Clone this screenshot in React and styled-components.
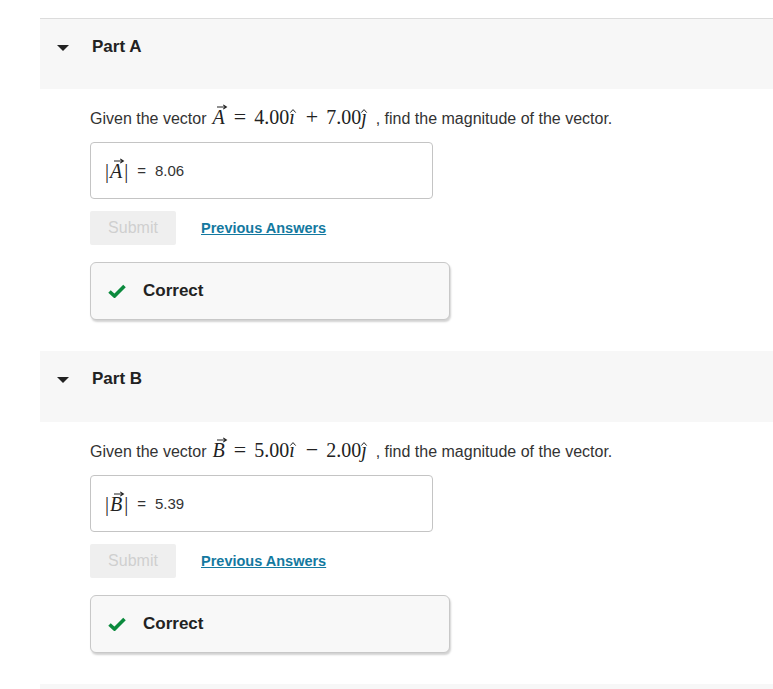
import styled, { createGlobalStyle } from 'styled-components';

const GlobalStyle = createGlobalStyle`
  body {
    margin: 0;
    background: #fff;
    font-family: "Liberation Sans", Arial, sans-serif;
    color: #333;
  }
`;

const Page = styled.div`
  padding: 18px 0 0 40px;
`;

const Section = styled.section`
  padding-bottom: 31px;
`;

const Header = styled.div`
  height: 71px;
  box-sizing: border-box;
  background: #f7f7f7;
  border-top: ${(p) => (p.$first ? '1px solid #dcdcdc' : 'none')};
  display: flex;
  align-items: flex-start;
  padding: 18px 0 0 17px;
  gap: 23px;
`;

const Caret = styled.span`
  width: 0;
  height: 0;
  margin-top: 8px;
  border-left: 6px solid transparent;
  border-right: 6px solid transparent;
  border-top: 6px solid #222;
`;

const Title = styled.h3`
  margin: 0;
  font-size: 17px;
  line-height: 20px;
  font-weight: 700;
  color: #222;
`;

const Body = styled.div`
  padding: 18px 0 0 50px;
`;

const Question = styled.p`
  margin: 0;
  height: 24px;
  font-size: 16px;
  line-height: 24px;
  color: #333;
  white-space: nowrap;
`;

const Math = styled.span`
  font-family: "Liberation Serif", "DejaVu Serif", serif;
  font-size: ${(p) => p.$size || 20}px;
  line-height: 1;
  color: #222;
  margin: 0 ${(p) => p.$mr || 0}px 0 ${(p) => p.$ml || 0}px;
`;

const Op = styled.span`
  font-size: 22px;
  line-height: 0;
  padding: 0 ${(p) => p.$pad || 8}px;
`;

const Accented = styled.span`
  position: relative;
  display: inline-block;
  font-style: italic;
  line-height: 1;
  padding-right: ${(p) => p.$pr || 0}px;
`;

const Mark = styled.svg`
  position: absolute;
  left: ${(p) => p.$left}px;
  top: ${(p) => p.$top}px;
  width: ${(p) => p.$w}px;
  height: ${(p) => p.$h}px;
  overflow: visible;
`;

const InputBox = styled.div`
  margin-top: 11px;
  width: 343px;
  height: 57px;
  box-sizing: border-box;
  border: 1px solid #c4c4c4;
  border-radius: 4px;
  display: flex;
  align-items: center;
  padding-left: 13px;
  font-size: 15px;
  color: #333;
`;

const Bar = styled.span`
  font-style: normal;
  padding: 0 1px;
`;

const Eq = styled.span`
  margin: 0 9px 0 8px;
`;

const Actions = styled.div`
  margin-top: 12px;
  display: flex;
  align-items: center;
  gap: 25px;
`;

const SubmitButton = styled.button`
  width: 86px;
  height: 34px;
  border: none;
  border-radius: 2px;
  background: #efefef;
  color: #cfcfcf;
  font-family: "Liberation Sans", Arial, sans-serif;
  font-size: 16px;
  padding: 0;
  cursor: default;
`;

const PrevLink = styled.a`
  font-size: 14.5px;
  font-weight: 700;
  color: #1479a0;
  text-decoration: underline;
`;

const Feedback = styled.div`
  margin-top: 17px;
  width: 360px;
  height: 58px;
  box-sizing: border-box;
  background: #f8f8f8;
  border: 1px solid #c8c8c8;
  border-radius: 6px;
  box-shadow: 1px 2px 2px rgba(0, 0, 0, 0.18);
  display: flex;
  align-items: center;
  padding-left: 17px;
  gap: 17px;
  font-size: 17px;
  font-weight: 700;
  color: #222;
`;

const CheckIcon = () => (
  <svg width="18" height="14" viewBox="0 0 18 14">
    <path d="M1.5 7.5 L6.5 12 L16.5 2" fill="none" stroke="#0b8a3d" strokeWidth="3.6" />
  </svg>
);

const Vec = ({ children }) => (
  <Accented $pr={1}>
    {children}
    <Mark $left={4} $top={-3} $w={10} $h={6} viewBox="0 0 10 6">
      <path d="M0 3 H8.6 M6.2 0.9 L9.4 3 L6.2 5.1" fill="none" stroke="#222" strokeWidth="1.1" />
    </Mark>
  </Accented>
);

const Unit = ({ children, left }) => (
  <Accented $pr={3}>
    {children}
    <Mark $left={left} $top={2} $w={6} $h={4} viewBox="0 0 6 4">
      <path d="M0.3 3.6 L3 0.6 L5.7 3.6" fill="none" stroke="#222" strokeWidth="1" />
    </Mark>
  </Accented>
);

const parts = [
  { name: 'Part A', v: 'A', x: '4.00', op: '+', y: '7.00', answer: '8.06' },
  { name: 'Part B', v: 'B', x: '5.00', op: '−', y: '2.00', answer: '5.39' },
];

const Part = ({ part, first }) => (
  <Section>
    <Header $first={first}>
      <Caret />
      <Title>{part.name}</Title>
    </Header>
    <Body>
      <Question>
        Given the vector
        <Math $ml={6} $mr={6}>
          <Vec>{part.v}</Vec>
          <Op>=</Op>
          {part.x}
          <Unit left={1}>ı</Unit>
          <Op>{part.op}</Op>
          {part.y}
          <Unit left={0}>ȷ</Unit>
        </Math>
        , find the magnitude of the vector.
      </Question>
      <InputBox>
        <Math>
          <Bar>|</Bar>
          <Vec>{part.v}</Vec>
          <Bar>|</Bar>
        </Math>
        <Eq>=</Eq>
        {part.answer}
      </InputBox>
      <Actions>
        <SubmitButton disabled>Submit</SubmitButton>
        <PrevLink href="#">Previous Answers</PrevLink>
      </Actions>
      <Feedback>
        <CheckIcon />
        Correct
      </Feedback>
    </Body>
  </Section>
);

export default function App() {
  return (
    <Page>
      <GlobalStyle />
      {parts.map((p, i) => (
        <Part key={p.name} part={p} first={i === 0} />
      ))}
      <Header />
    </Page>
  );
}
